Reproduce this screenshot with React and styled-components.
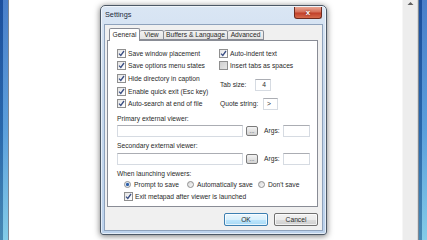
import React from "react";
import styled, { createGlobalStyle } from "styled-components";

const GlobalStyle = createGlobalStyle`
  html, body { margin: 0; padding: 0; }
  body {
    width: 427px;
    height: 240px;
    overflow: hidden;
    font-family: "Liberation Sans", Arial, sans-serif;
    font-size: 6.7px;
    color: #2a2a2a;
    white-space: nowrap;
  }
`;

const Screen = styled.div`
  display: flex;
  width: 427px;
  height: 240px;
`;

const WindowEdge = styled.div`
  width: ${p => p.w}px;
  flex-shrink: 0;
  background:
    linear-gradient(to right, rgba(0, 30, 90, 0.35) 0 40%, rgba(255, 255, 255, 0.15) 40% 100%),
    linear-gradient(to bottom, #2a68c0, #3f8fd6 55%, #6ec3e4);
  border-${p => (p.side === "left" ? "right" : "left")}: 1px solid #7c8794;
`;

const Desktop = styled.div`
  flex: 1;
  position: relative;
  background: #fff;
`;

const Scrollbar = styled.div`
  width: 14px;
  flex-shrink: 0;
  background: #ededed;
  border-left: 1px solid #f6f6f6;
  border-right: 1px solid #dadada;
  display: flex;
  justify-content: center;
  padding-top: 1px;
`;

const Dialog = styled.div`
  position: absolute;
  left: 91px;
  top: 5px;
  width: 227px;
  height: 230px;
  box-sizing: border-box;
  display: flex;
  flex-direction: column;
  border: 1px solid #4c5866;
  border-radius: 5px 5px 3px 3px;
  background: linear-gradient(to bottom, #dae6f4, #c7d9ee 40%, #bcd2ec);
  box-shadow: 0 1px 6px rgba(0, 0, 0, 0.55), inset 0 0 0 1px rgba(255, 255, 255, 0.6);
`;

const TitleBar = styled.div`
  height: 18px;
  display: flex;
  align-items: flex-start;
  justify-content: space-between;
  padding: 0 4px 0 4px;
`;

const Title = styled.span`
  font-size: 7.3px;
  line-height: 18px;
  color: #1c2a3a;
`;

const CloseButton = styled.div`
  width: 26px;
  height: 11px;
  margin-top: 1px;
  border: 1px solid #6d2a1e;
  border-top: none;
  border-radius: 0 0 3px 3px;
  background: linear-gradient(to bottom, #e9a592, #d5705a 45%, #c1402a 55%, #d66a4c);
  display: flex;
  align-items: center;
  justify-content: center;
  color: #fff;
  font-size: 8px;
  font-weight: bold;
  text-shadow: 0 0 2px #6a1e10;
`;

const Client = styled.div`
  flex: 1;
  margin: 0 3px 3px 3px;
  border: 1px solid #8ea2bc;
  background: #f0f0f0;
  padding: 2px 4px 4px 2px;
  display: flex;
  flex-direction: column;
`;

const TabRow = styled.div`
  display: flex;
  align-items: flex-end;
  height: 13px;
  padding-left: 2px;
  position: relative;
  z-index: 1;
`;

const Tab = styled.div`
  width: ${p => p.w}px;
  box-sizing: border-box;
  height: ${p => (p.active ? 13 : 10)}px;
  margin-bottom: ${p => (p.active ? -1 : 0)}px;
  border: 1px solid #898c95;
  border-bottom: ${p => (p.active ? "none" : "1px solid #898c95")};
  border-left: ${p => (p.first || p.active ? "1px solid #898c95" : "none")};
  border-radius: 2px 2px 0 0;
  background: ${p => (p.active ? "#fff" : "linear-gradient(to bottom, #f2f2f2, #e3e3e3)")};
  display: flex;
  align-items: center;
  justify-content: center;
  padding-top: ${p => (p.active ? 0 : 1)}px;
  line-height: 1;
`;

const Panel = styled.div`
  flex: 1;
  border: 1px solid #898c95;
  background: #fff;
  padding: 6px 7px 0 9px;
  display: flex;
  flex-direction: column;
`;

const TopGrid = styled.div`
  display: grid;
  grid-template-columns: 102px 1fr;
`;

const Column = styled.div`
  display: flex;
  flex-direction: column;
`;

const CheckRow = styled.div`
  height: 12.6px;
  display: flex;
  align-items: center;
  gap: 2px;
  padding-left: ${p => p.indent || 0}px;
`;

const Box = styled.span`
  width: 9px;
  height: 9px;
  box-sizing: border-box;
  flex-shrink: 0;
  border: 1px solid #8f8f8f;
  background: ${p =>
    p.checked
      ? "linear-gradient(135deg, #e3e3e3, #f7f7f7 60%, #fff)"
      : "linear-gradient(135deg, #cfcfcf, #e6e6e6)"};
  display: flex;
  align-items: center;
  justify-content: center;
`;

const FieldRow = styled.div`
  display: flex;
  align-items: center;
  height: 12px;
  margin-top: ${p => p.mt || 0}px;
`;

const FieldLabel = styled.span`
  width: ${p => p.w}px;
  padding-left: 1px;
  flex-shrink: 0;
`;

const TextBox = styled.div`
  width: ${p => p.w}px;
  height: ${p => p.h || 12}px;
  box-sizing: border-box;
  border: 1px solid #d6dbe2;
  border-top-color: #abadb3;
  background: #fff;
  display: flex;
  align-items: center;
  padding-left: ${p => p.pl || 2}px;
  justify-content: ${p => (p.center ? "center" : "flex-start")};
  flex-shrink: 0;
`;

const Label = styled.div`
  height: 10px;
  display: flex;
  align-items: center;
  margin-top: ${p => p.mt || 0}px;
`;

const ViewerRow = styled.div`
  display: flex;
  align-items: center;
  height: 12px;
  margin-top: ${p => p.mt || 0}px;
`;

const SmallButton = styled.div`
  width: 12px;
  height: 10px;
  box-sizing: border-box;
  margin-left: 3px;
  border: 1px solid #7b7b7b;
  border-radius: 2px;
  background: linear-gradient(to bottom, #f3f3f3, #e2e2e2 50%, #d3d3d3);
  display: flex;
  align-items: flex-end;
  justify-content: center;
  font-size: 6px;
  line-height: 7px;
`;

const ArgsLabel = styled.span`
  margin-left: 6px;
  width: 19px;
`;

const RadioRow = styled.div`
  display: flex;
  align-items: center;
  height: 10px;
  margin-top: 1px;
  padding-left: 7px;
`;

const RadioOption = styled.div`
  display: flex;
  align-items: center;
  gap: 3px;
  width: ${p => (p.w ? `${p.w}px` : "auto")};
`;

const Radio = styled.span`
  width: 7px;
  height: 7px;
  box-sizing: border-box;
  flex-shrink: 0;
  border-radius: 50%;
  border: 1px solid #8f8f8f;
  background: ${p =>
    p.checked
      ? "radial-gradient(circle, #2f5fa8 0 35%, #8fb0db 45%, #eef2f6 60%)"
      : "linear-gradient(135deg, #d8d8d8, #f8f8f8)"};
`;

const ButtonBar = styled.div`
  display: flex;
  justify-content: flex-end;
  gap: 6px;
  margin-top: 6px;
`;

const PushButton = styled.div`
  width: 44px;
  height: 13px;
  box-sizing: border-box;
  border: 1px solid ${p => (p.primary ? "#3c7fb1" : "#707070")};
  border-radius: 2px;
  background: ${p =>
    p.primary
      ? "linear-gradient(to bottom, #eaf6fd, #d9f0fc 50%, #bee6fd 51%, #a7d9f5)"
      : "linear-gradient(to bottom, #f2f2f2, #ebebeb 50%, #dddddd 51%, #cfcfcf)"};
  box-shadow: inset 0 0 0 1px rgba(255, 255, 255, 0.7);
  display: flex;
  align-items: center;
  justify-content: center;
`;

const Check = () => (
  <svg width="7" height="7" viewBox="0 0 7 7">
    <path d="M1 3.6 L2.8 5.5 L6 1" fill="none" stroke="#3b4f84" strokeWidth="1.3" />
  </svg>
);

const CheckItem = ({ checked, children, indent }) => (
  <CheckRow indent={indent}>
    <Box checked={checked}>{checked && <Check />}</Box>
    <span>{children}</span>
  </CheckRow>
);

const UpArrow = () => (
  <svg width="7" height="5" viewBox="0 0 7 5">
    <path d="M0.5 4 L3.5 1 L6.5 4 Z" fill="#606060" />
  </svg>
);

export default function App() {
  return (
    <>
      <GlobalStyle />
      <Screen>
        <WindowEdge side="left" w={8} />
        <Desktop>
          <Dialog>
            <TitleBar>
              <Title>Settings</Title>
              <CloseButton>x</CloseButton>
            </TitleBar>
            <Client>
              <TabRow>
                <Tab active first w={31}>General</Tab>
                <Tab w={24}>View</Tab>
                <Tab w={64}>Buffers &amp; Language</Tab>
                <Tab w={36}>Advanced</Tab>
              </TabRow>
              <Panel>
                <TopGrid>
                  <Column>
                    <CheckItem checked>Save window placement</CheckItem>
                    <CheckItem checked>Save options menu states</CheckItem>
                    <CheckItem checked>Hide directory in caption</CheckItem>
                    <CheckItem checked>Enable quick exit (Esc key)</CheckItem>
                    <CheckItem checked>Auto-search at end of file</CheckItem>
                  </Column>
                  <Column>
                    <CheckItem checked>Auto-indent text</CheckItem>
                    <CheckItem>Insert tabs as spaces</CheckItem>
                    <FieldRow mt={6.5}>
                      <FieldLabel w={35}>Tab size:</FieldLabel>
                      <TextBox w={16} center pl={0}>4</TextBox>
                    </FieldRow>
                    <FieldRow mt={7}>
                      <FieldLabel w={43}>Quote string:</FieldLabel>
                      <TextBox w={15} pl={3}>&gt;</TextBox>
                    </FieldRow>
                  </Column>
                </TopGrid>
                <Label mt={4}>Primary external viewer:</Label>
                <ViewerRow mt={1}>
                  <TextBox w={126} />
                  <SmallButton>...</SmallButton>
                  <ArgsLabel>Args:</ArgsLabel>
                  <TextBox w={27} />
                </ViewerRow>
                <Label mt={4}>Secondary external viewer:</Label>
                <ViewerRow mt={2}>
                  <TextBox w={126} />
                  <SmallButton>...</SmallButton>
                  <ArgsLabel>Args:</ArgsLabel>
                  <TextBox w={27} />
                </ViewerRow>
                <Label mt={4}>When launching viewers:</Label>
                <RadioRow>
                  <RadioOption w={63}>
                    <Radio checked />
                    <span>Prompt to save</span>
                  </RadioOption>
                  <RadioOption w={71}>
                    <Radio />
                    <span>Automatically save</span>
                  </RadioOption>
                  <RadioOption>
                    <Radio />
                    <span>Don't save</span>
                  </RadioOption>
                </RadioRow>
                <CheckItem checked indent={7}>Exit metapad after viewer is launched</CheckItem>
              </Panel>
              <ButtonBar>
                <PushButton primary>OK</PushButton>
                <PushButton>Cancel</PushButton>
              </ButtonBar>
            </Client>
          </Dialog>
        </Desktop>
        <Scrollbar>
          <UpArrow />
        </Scrollbar>
        <WindowEdge side="right" w={8} />
      </Screen>
    </>
  );
}
